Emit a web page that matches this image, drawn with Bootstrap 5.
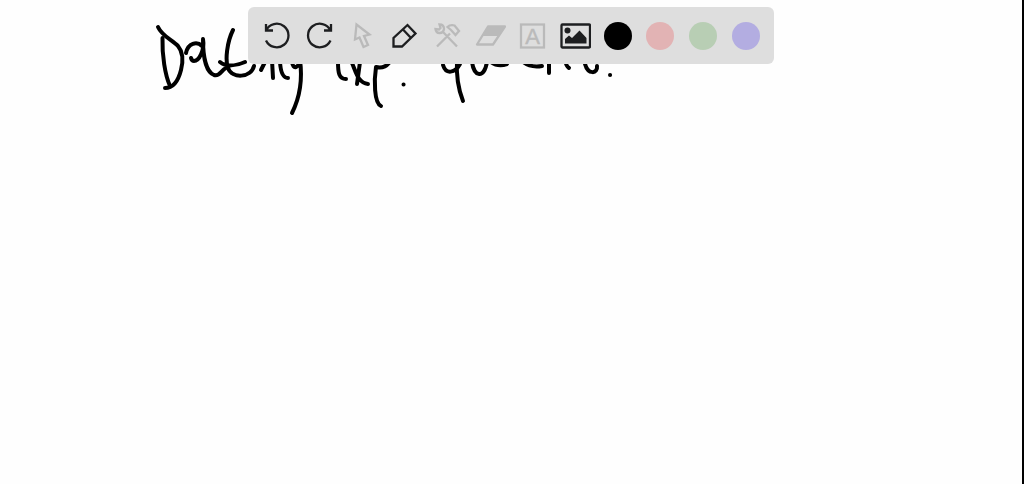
<!DOCTYPE html>
<html lang="en">
<head>
<meta charset="utf-8">
<meta name="viewport" content="width=device-width, initial-scale=1">
<title>Whiteboard</title>
<link href="https://cdn.jsdelivr.net/npm/bootstrap@5.3.0/dist/css/bootstrap.min.css" rel="stylesheet">
<style>
  body { background: #fefefe; font-family: "Liberation Sans", Arial, sans-serif; }
  .board { border-right: 2px solid #000; }
  .ink { top: 0; left: 0; pointer-events: none; }
  .tools { width: 526px; max-width: 100%; height: 57px; margin-top: 7px; padding: 0 7px; background: #dedede; border-radius: 6px; }
  .tool { flex: 1 1 0; min-width: 0; height: 44px; color: #1d1e20; }
  .tool:disabled { color: #bababa; border: 0; opacity: 1; }
  .tool svg { width: 32px; height: 32px; flex: none; fill: none; stroke: currentColor; stroke-width: 2.3; }
  .swatch { width: 28px; height: 28px; flex: none; }
  .ink-black { background: #000; }
  .ink-red { background: #e2b3b4; }
  .ink-green { background: #b8ceb4; }
  .ink-violet { background: #b3ade1; }
</style>
</head>
<body>
<main class="board position-relative min-vh-100 overflow-hidden d-flex justify-content-center align-items-start">
  <!-- Handwritten strokes -->
  <svg class="ink position-absolute" width="1024" height="484" viewBox="0 0 1024 484" fill="none" stroke="#000" stroke-width="4" stroke-linecap="round" stroke-linejoin="round" role="img" aria-label="Dating exp. quotient.">
    <path d="M162.5 38C162 55 165 75 170 86"/>
    <path d="M158 27C162 36 172 40 178 46C183 52 183 62 181 70C178 82 173 88 165 88"/>
    <path d="M186 53C188 43 197 41 202 46M203 39C205 50 199 61 194 61Q192 61 191 58M203 40C203 56 206 72 214 75C220 77 221 70 226 68"/>
    <path d="M233 30C227 42 225 60 228 68C232 79 251 78 254 66M220 62C226 67 236 66 245 62"/>
    <path d="M261 70L265 62M272 60L273 78M280 62Q281 78 288 78"/>
    <path d="M292 62Q293 68 296 67Q299 66 300 60C303 82 299 99 292 113"/>
    <path d="M345 62L338 62C338 73 339 79 346 79"/>
    <path d="M352 63C356 72 358 83 368 84M360 62L357 84"/>
    <path d="M381 106C374 103 374 80 376 67Q384 69 389 63"/>
    <path d="M443 65C446 75 455 73 460 64M457 60C456 78 459 91 463 101"/>
    <path d="M472 62C474 77 484 79 487 62M491 62Q498 67 507 64"/>
    <path d="M523 62Q531 68 542 66M549 60V73M565 60Q566 66 569 68M585 64C588 75 598 74 597 66"/>
    <path d="M403.5 84.5h.1M610 75h.1"/>
  </svg>

  <div class="tools position-relative d-flex align-items-center" role="toolbar" aria-label="Drawing tools">
    <button type="button" class="tool btn p-0 border-0 d-flex align-items-center justify-content-center" aria-label="Undo">
      <svg viewBox="0 0 32 32"><path d="M6 20.5A11.8 11.8 0 1 0 6 10.5M6 4V10.5H13"/></svg>
    </button>
    <button type="button" class="tool btn p-0 border-0 d-flex align-items-center justify-content-center" aria-label="Redo">
      <svg viewBox="0 0 32 32"><path d="M27.5 20.5A11.8 11.8 0 1 1 27.5 10.5M28 4V10.5H21"/></svg>
    </button>
    <button type="button" class="tool btn p-0 border-0 d-flex align-items-center justify-content-center" aria-label="Select" disabled>
      <svg viewBox="0 0 32 32"><path d="M10.5 4.5L9 19.5L13.5 17.5L17.5 27L22 25L18 16L23.5 14.5Z"/></svg>
    </button>
    <button type="button" class="tool btn p-0 border-0 d-flex align-items-center justify-content-center" aria-label="Pen">
      <svg viewBox="0 0 32 32"><path d="M5.500 26.500V18L19.500 5L27.500 13.500L14 26.500ZM15 9.500L23 18"/></svg>
    </button>
    <button type="button" class="tool btn p-0 border-0 d-flex align-items-center justify-content-center" aria-label="Tools" disabled>
      <svg viewBox="0 0 32 32"><path d="M6 26.500L19 13.500M26 26.500L12.500 12.500M8.500 4.500Q13 4.500 13 9Q12.500 13 8.500 13Q5 13 4.500 9L8 9.500L9.500 8ZM16.500 7Q19 4.500 23.500 5.500L28 11L24.500 15L20 10Z"/></svg>
    </button>
    <button type="button" class="tool btn p-0 border-0 d-flex align-items-center justify-content-center" aria-label="Eraser" disabled>
      <svg viewBox="0 0 32 32" stroke-linejoin="round"><path d="M3 24.500L14 6.500H31L19 24.500Z"/><path d="M8 16L14 6.500H31L24.500 16Z" fill="currentColor" stroke="none"/></svg>
    </button>
    <button type="button" class="tool btn p-0 border-0 d-flex align-items-center justify-content-center" aria-label="Text" disabled>
      <svg viewBox="0 0 32 32"><rect x="5" y="4.500" width="23" height="23"/><text x="16.500" y="24" text-anchor="middle" font-size="22" fill="currentColor" stroke="currentColor" stroke-width=".4">A</text></svg>
    </button>
    <button type="button" class="tool btn p-0 border-0 d-flex align-items-center justify-content-center" aria-label="Image">
      <svg viewBox="0 0 32 32"><rect x="2.500" y="4.500" width="28.500" height="23" rx="1"/><g fill="currentColor" stroke="none"><circle cx="8.500" cy="10.500" r="3"/><path d="M6 23.500V19L10 15.500L13 18L20.500 10.500L27.500 18V23.500Z"/></g></svg>
    </button>
    <button type="button" class="tool btn p-0 border-0 d-flex align-items-center justify-content-center" aria-label="Black"><span class="swatch ink-black rounded-circle"></span></button>
    <button type="button" class="tool btn p-0 border-0 d-flex align-items-center justify-content-center" aria-label="Red"><span class="swatch ink-red rounded-circle"></span></button>
    <button type="button" class="tool btn p-0 border-0 d-flex align-items-center justify-content-center" aria-label="Green"><span class="swatch ink-green rounded-circle"></span></button>
    <button type="button" class="tool btn p-0 border-0 d-flex align-items-center justify-content-center" aria-label="Violet"><span class="swatch ink-violet rounded-circle"></span></button>
  </div>
</main>
<script src="https://cdn.jsdelivr.net/npm/bootstrap@5.3.0/dist/js/bootstrap.bundle.min.js"></script>
</body>
</html>
